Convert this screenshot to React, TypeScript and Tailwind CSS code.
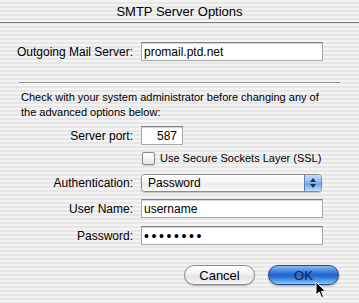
import React from 'react';

const FIELD = 'bg-white border border-[#a9a9a9] border-t-[#7f7f7f] shadow-[inset_0_1px_1px_rgba(0,0,0,0.18)] text-[12px] leading-none flex items-center px-[2px]';

function Row({ label, children, className = '' }: { label: string; children: React.ReactNode; className?: string }) {
  return (
    <div className={`flex items-center ${className}`}>
      <div className="w-[133px] shrink-0 text-right text-[12px] leading-none">{label}</div>
      <div className="ml-[8px] flex h-full">{children}</div>
    </div>
  );
}

function Cursor() {
  return (
    <svg className="absolute left-[315px] top-[281px]" width="12" height="18" viewBox="0 0 12 18">
      <path d="M1 1 L1 14 L4.2 11 L6.6 16.6 L8.6 15.7 L6.3 10.3 L10.6 10.3 Z" fill="#000" stroke="#fff" strokeWidth="1" strokeLinejoin="round" />
    </svg>
  );
}

export default function App() {
  return (
    <div className="relative w-[359px] h-[303px] overflow-hidden text-black font-['Liberation_Sans',Arial,sans-serif] bg-[repeating-linear-gradient(180deg,#f3f3f3_0px,#f3f3f3_2px,#e6e6e6_2px,#e6e6e6_4px)]">
      <div className="h-[23px] border-b border-[#7a7a7a] flex items-center justify-center text-[13px] pt-[1px]">SMTP Server Options</div>

      <Row label="Outgoing Mail Server:" className="mt-[19px] h-[19px]">
        <div className={`${FIELD} w-[182px]`}>promail.ptd.net</div>
      </Row>

      <div className="mt-[21px] mx-[19px] h-px bg-[#8e8e8e] shadow-[0_1px_0_#fbfbfb]" />

      <p className="mt-[7px] ml-[21px] text-[11px] leading-[15px] whitespace-nowrap">
        Check with your system administrator before changing any of<br />the advanced options below:
      </p>

      <Row label="Server port:" className="mt-[6px] h-[19px]">
        <div className={`${FIELD} w-[42px] justify-end pr-[5px]`}>587</div>
      </Row>

      <div className="mt-[7px] h-[13px] pl-[142px] flex items-center">
        <div className="w-[13px] h-[13px] rounded-[2px] border border-[#8a8a8a] bg-[linear-gradient(180deg,#ffffff,#e4e4e4)] shadow-[0_1px_1px_rgba(0,0,0,0.15)]" />
        <span className="ml-[5px] text-[11px] leading-none">Use Secure Sockets Layer (SSL)</span>
      </div>

      <Row label="Authentication:" className="mt-[9px] h-[18px]">
        <div className="w-[181px] h-[18px] flex rounded-[4px] border border-[#8c8c8c] overflow-hidden shadow-[0_1px_1px_rgba(0,0,0,0.2)]">
          <div className="flex-1 flex items-center pl-[6px] text-[12px] leading-none bg-[linear-gradient(180deg,#ffffff_0%,#f4f4f4_50%,#e9e9e9_55%,#fbfbfb_100%)]">Password</div>
          <div className="w-[17px] flex flex-col items-center justify-center gap-[2px] border-l border-[#5c7fb6] bg-[linear-gradient(180deg,#c6dcf7_0%,#8fb9ec_45%,#6fa3e6_55%,#bfe0fb_100%)]">
            <svg width="6" height="4" viewBox="0 0 6 4"><path d="M0 4 L3 0 L6 4 Z" fill="#1c2f57" /></svg>
            <svg width="6" height="4" viewBox="0 0 6 4"><path d="M0 0 L3 4 L6 0 Z" fill="#1c2f57" /></svg>
          </div>
        </div>
      </Row>

      <Row label="User Name:" className="mt-[7px] h-[19px]">
        <div className={`${FIELD} w-[182px]`}>username</div>
      </Row>

      <Row label="Password:" className="mt-[8px] h-[19px]">
        <div className={`${FIELD} w-[182px] border-[#8fb0d8] shadow-[0_0_0_2px_#b9d2ef] tracking-[2.6px] text-[14px]`}>••••••••</div>
      </Row>

      <div className="mt-[20px] h-[20px] flex pl-[184px]">
        <div className="w-[71px] h-[20px] rounded-full border border-[#8a8a8a] flex items-center justify-center text-[13px] leading-none bg-[linear-gradient(180deg,#ffffff_0%,#f2f2f2_45%,#e2e2e2_55%,#f7f7f7_100%)] shadow-[0_1px_1px_rgba(0,0,0,0.25)]">Cancel</div>
        <div className="ml-[13px] w-[71px] h-[20px] rounded-full border border-[#1f4a8c] flex items-center justify-center text-[13px] leading-none text-[#0f2147] bg-[linear-gradient(180deg,#8fbcef_0%,#3f85dc_30%,#1f63cc_50%,#2f7ad9_65%,#86cbf8_100%)] shadow-[0_1px_2px_rgba(0,0,0,0.35)]">OK</div>
      </div>

      <Cursor />
    </div>
  );
}
